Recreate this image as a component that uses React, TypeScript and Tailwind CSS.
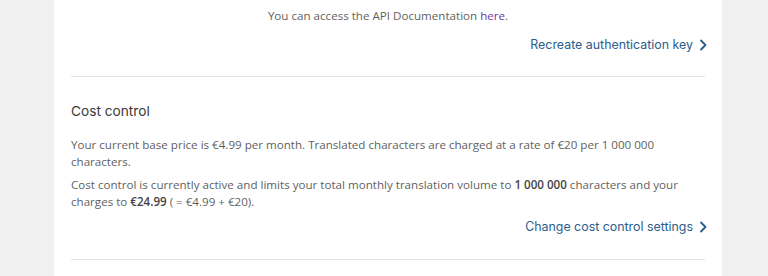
import React from "react";

const Chevron = () => (
  <svg width="8" height="12" viewBox="0 0 8 12" className="ml-[6px] mr-[-2px] shrink-0">
    <path d="M2 1.5 L6.5 6 L2 10.5" fill="none" stroke="#2b5c8c" strokeWidth="1.8" strokeLinecap="round" strokeLinejoin="round" />
  </svg>
);

export default function App() {
  const body = { fontFamily: '"Open Sans", "Liberation Sans", sans-serif' };
  const head = { fontFamily: '"Inter", "DejaVu Sans", sans-serif' };
  return (
    <div className="h-[276px] w-[768px] overflow-hidden bg-[#f0f0f0] flex">
      <div className="ml-[54px] w-[668px] bg-white px-[17px] flex flex-col">
        <div className="mt-[7px] h-[18px] text-center text-[11.6px] leading-[18px] text-[#5f5f5f]" style={body}>
          You can access the API Documentation <span className="text-[#6b3aa0]">here</span>.
        </div>
        <div className="mt-[11px] flex items-center justify-end h-[18px] text-[12.4px] text-[#2b5c8c]" style={head}>
          Recreate authentication key
          <Chevron />
        </div>
        <div className="mt-[22px] h-px bg-[#e4e4e4]" />
        <div className="mt-[24px] h-[20px] leading-[20px] text-[13.7px] text-[#3a3a3a]" style={head}>
          Cost control
        </div>
        <div className="mt-[15px] w-[620px] text-[11.6px] leading-[17px] text-[#5f5f5f]" style={body}>
          <p>
            Your current base price is €4.99 per month. Translated characters are charged at a rate of €20 per 1 000 000 characters.
          </p>
          <p className="mt-[6px]">
            Cost control is currently active and limits your total monthly translation volume to{" "}
            <span className="font-semibold text-[#444]">1 000 000</span> characters and your charges to{" "}
            <span className="font-semibold text-[#444]">€24.99</span> ( = €4.99 + €20).
          </p>
        </div>
        <div className="mt-[8px] flex items-center justify-end h-[18px] text-[12.4px] text-[#2b5c8c]" style={head}>
          Change cost control settings
          <Chevron />
        </div>
        <div className="mt-[23px] h-px bg-[#e4e4e4]" />
      </div>
    </div>
  );
}
